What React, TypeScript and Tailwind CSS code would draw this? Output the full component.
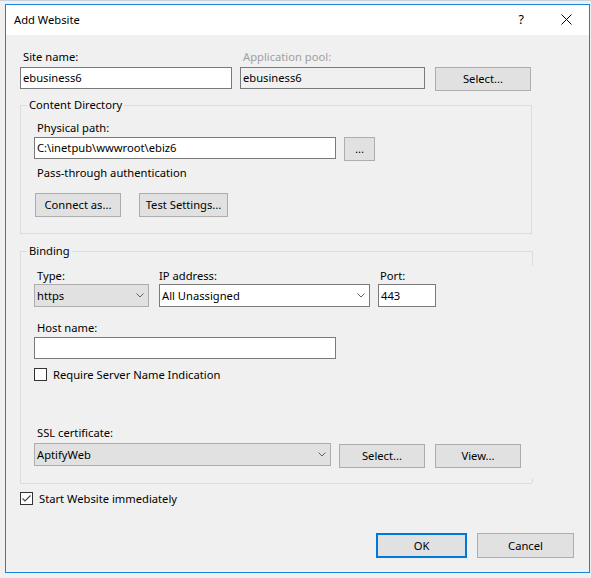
import React from "react";

const Label = ({ children, className = "" }: { children: React.ReactNode; className?: string }) => (
  <div className={`h-[16px] leading-[16px] whitespace-nowrap ${className}`}>{children}</div>
);

const TextBox = ({ value = "", className = "", readOnly = false }: { value?: string; className?: string; readOnly?: boolean }) => (
  <div
    className={`h-[22px] border border-[#7a7a7a] px-[2px] flex items-center whitespace-nowrap overflow-hidden ${
      readOnly ? "bg-[#f0f0f0]" : "bg-white"
    } ${className}`}
  >
    {value}
  </div>
);

const Button = ({ children, className = "" }: { children: React.ReactNode; className?: string }) => (
  <div
    className={`h-[24px] bg-[#e1e1e1] border border-[#adadad] flex items-center justify-center whitespace-nowrap ${className}`}
  >
    {children}
  </div>
);

const Chevron = () => (
  <svg width="8" height="5" viewBox="0 0 8 5" className="mr-[4px] shrink-0">
    <polyline points="0.5,0.5 4,4 7.5,0.5" fill="none" stroke="#606060" strokeWidth="1" />
  </svg>
);

const Combo = ({ value, gray = false, className = "" }: { value: string; gray?: boolean; className?: string }) => (
  <div
    className={`h-[23px] border flex items-center justify-between pl-[2px] whitespace-nowrap ${
      gray ? "bg-[#e1e1e1] border-[#adadad]" : "bg-white border-[#7a7a7a]"
    } ${className}`}
  >
    <span>{value}</span>
    <Chevron />
  </div>
);

const CheckBox = ({ checked = false, label }: { checked?: boolean; label: string }) => (
  <div className="flex items-center h-[13px]">
    <div className="w-[13px] h-[13px] border border-[#333333] bg-white flex items-center justify-center shrink-0">
      {checked && (
        <svg width="11" height="11" viewBox="0 0 11 11">
          <polyline points="1.5,5.5 4,8 9.5,2.5" fill="none" stroke="#4a4a4a" strokeWidth="1.2" />
        </svg>
      )}
    </div>
    <span className="ml-[6px] leading-[16px] whitespace-nowrap">{label}</span>
  </div>
);

export default function App() {
  return (
    <div className="w-[591px] h-[578px] overflow-hidden bg-[#f0f0f0] border-t border-[#c5d2de] pt-[3px] pl-[5px] text-[11.2px] leading-[16px] text-black font-['Noto_Sans','Open_Sans',sans-serif]">
      <div className="w-[585px] h-[569px] border border-[#1883d7] bg-[#f0f0f0] flex flex-col">
        {/* title bar */}
        <div className="h-[30px] bg-white flex items-start pt-[7px] pl-[8px] shrink-0">
          <span>Add Website</span>
          <span className="ml-auto text-[12.5px]">?</span>
          <svg width="11" height="11" viewBox="0 0 11 11" className="ml-[37px] mr-[17px] mt-[2px]">
            <line x1="0.5" y1="0.5" x2="10.5" y2="10.5" stroke="#000" strokeWidth="1" />
            <line x1="10.5" y1="0.5" x2="0.5" y2="10.5" stroke="#000" strokeWidth="1" />
          </svg>
        </div>

        {/* body */}
        <div className="flex-1 flex flex-col pl-[14px] pt-[14px] pr-[15px] pb-[14px]">
          <div className="flex items-start">
            <div className="w-[212px]">
              <Label className="pl-[3px] mb-[2px]">Site name:</Label>
              <TextBox value="ebusiness6" />
            </div>
            <div className="w-[185px] ml-[8px]">
              <Label className="pl-[3px] mb-[2px] text-[#a0a0a0]">Application pool:</Label>
              <TextBox value="ebusiness6" readOnly />
            </div>
            <Button className="w-[96px] ml-[10px] mt-[18px]">Select...</Button>
          </div>

          <fieldset className="w-[512px] mt-[6px] border border-[#dcdcdc]">
            <legend className="ml-[6px] px-[2px] leading-[16px]">Content Directory</legend>
            <div className="pl-[13px] pt-[7px] pb-[16px]">
              <Label className="pl-[3px] mb-[1px]">Physical path:</Label>
              <div className="flex items-start">
                <TextBox value={"C:\\inetpub\\wwwroot\\ebiz6"} className="w-[302px]" />
                <Button className="w-[31px] ml-[8px]">...</Button>
              </div>
              <Label className="pl-[3px] mt-[4px]">Pass-through authentication</Label>
              <div className="flex mt-[12px]">
                <Button className="w-[86px] ml-[1px]">Connect as...</Button>
                <Button className="w-[89px] ml-[18px]">Test Settings...</Button>
              </div>
            </div>
          </fieldset>

          <fieldset className="relative w-[512px] mt-[9px] border-t border-l border-b border-[#dcdcdc]">
            <legend className="ml-[6px] px-[2px] leading-[16px]">Binding</legend>
            <span className="absolute right-[-1px] top-[-8px] w-px h-[15px] bg-[#dcdcdc]" />
            <span className="absolute right-[-1px] bottom-0 w-px h-[5px] bg-[#dcdcdc]" />
            <div className="pl-[13px] pt-[9px] pb-[15px]">
              <div className="flex items-start">
                <div className="w-[115px]">
                  <Label className="pl-[3px]">Type:</Label>
                  <Combo value="https" gray />
                </div>
                <div className="w-[211px] ml-[10px]">
                  <Label>IP address:</Label>
                  <Combo value="All Unassigned" />
                </div>
                <div className="w-[58px] ml-[8px]">
                  <Label className="pl-[2px]">Port:</Label>
                  <TextBox value="443" className="h-[23px]" />
                </div>
              </div>
              <Label className="pl-[3px] mt-[13px] mb-[1px]">Host name:</Label>
              <TextBox className="w-[302px]" />
              <div className="mt-[9px]">
                <CheckBox label="Require Server Name Indication" />
              </div>
              <Label className="pl-[3px] mt-[44px] mb-[2px]">SSL certificate:</Label>
              <div className="flex items-start">
                <Combo value="AptifyWeb" gray className="w-[297px]" />
                <Button className="w-[86px] ml-[8px] mt-[1px]">Select...</Button>
                <Button className="w-[86px] ml-[10px] mt-[1px]">View...</Button>
              </div>
            </div>
          </fieldset>

          <div className="mt-[8px]">
            <CheckBox checked label="Start Website immediately" />
          </div>

          <div className="flex justify-end mt-auto">
            <div className="w-[91px] h-[25px] border-2 border-[#0078d7] bg-[#e1e1e1] flex items-center justify-center">
              OK
            </div>
            <Button className="w-[97px] h-[25px] ml-[10px]">Cancel</Button>
          </div>
        </div>
      </div>
    </div>
  );
}
